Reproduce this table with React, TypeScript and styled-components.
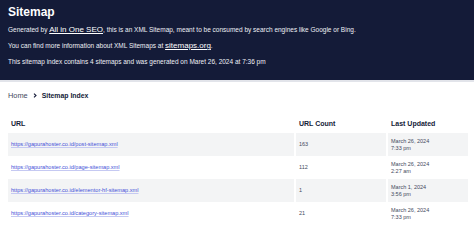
import React, { FC } from "react";
import styled, { createGlobalStyle } from "styled-components";

type SitemapRow = {
  url: string;
  count: number;
  date: string;
  time: string;
};

const rows: SitemapRow[] = [
  { url: "https://gapurahoster.co.id/post-sitemap.xml", count: 163, date: "March 26, 2024", time: "7:33 pm" },
  { url: "https://gapurahoster.co.id/page-sitemap.xml", count: 112, date: "March 26, 2024", time: "2:27 am" },
  { url: "https://gapurahoster.co.id/elementor-hf-sitemap.xml", count: 1, date: "March 1, 2024", time: "3:56 pm" },
  { url: "https://gapurahoster.co.id/category-sitemap.xml", count: 21, date: "March 26, 2024", time: "7:33 pm" },
];

const GlobalStyle = createGlobalStyle`
  body {
    margin: 0;
    background: #ffffff;
    font-family: "Liberation Sans", Arial, sans-serif;
    color: #141b38;
  }
`;

const Header = styled.header`
  background: #141b38;
  color: #eef0f6;
  padding: 5px 8px 10px;
  height: 82px;
  box-sizing: border-box;
  border-bottom: 2px solid #e2e4ea;
`;

const Title = styled.h1`
  margin: 0 0 3px;
  font-size: 12px;
  line-height: 14px;
  font-weight: bold;
  color: #ffffff;
`;

const Info = styled.p`
  margin: 0;
  font-size: 6.5px;
  line-height: 16px;
  white-space: nowrap;

  a {
    color: #ffffff;
    font-size: 8px;
    text-decoration: underline;
  }
`;

const Main = styled.main`
  padding: 8px 4px 0 6px;
`;

const Breadcrumb = styled.nav`
  display: flex;
  align-items: center;
  gap: 5px;
  height: 10px;
  padding-left: 2px;
  font-size: 7.4px;
  color: #434960;
`;

const Crumb = styled.span<{ $current?: boolean }>`
  font-weight: ${(p) => (p.$current ? "bold" : "normal")};
  font-size: ${(p) => (p.$current ? "6.9px" : "7.4px")};
  color: ${(p) => (p.$current ? "#141b38" : "#434960")};
`;

const Table = styled.table`
  margin-top: 11px;
  border-collapse: separate;
  border-spacing: 2px 0;
  table-layout: fixed;
  width: 464px;
`;

const HeadCell = styled.th`
  height: 20px;
  padding: 2px 3px 0;
  text-align: left;
  font-size: 7px;
  font-weight: bold;
  color: #141b38;
  vertical-align: middle;
`;

const Row = styled.tr<{ $shaded: boolean }>`
  td {
    background: ${(p) => (p.$shaded ? "#f3f4f5" : "#ffffff")};
  }
`;

const Cell = styled.td`
  height: 23px;
  padding: 0 3px;
  vertical-align: middle;
  font-size: 5.5px;
  line-height: 6.5px;
  color: #434960;
`;

const Link = styled.a`
  font-size: 5.6px;
  color: #4350d8;
  text-decoration: underline;
  text-decoration-color: #c5c9f2;
`;

const Chevron: FC = () => (
  <svg width="4" height="5" viewBox="0 0 4 5" fill="none">
    <path d="M1 0.6 L3 2.5 L1 4.4" stroke="#141b38" strokeWidth="1.1" />
  </svg>
);

const App: FC = () => {
  return (
    <>
      <GlobalStyle />
      <Header>
        <Title>Sitemap</Title>
        <Info>
          Generated by <a href="#">All in One SEO</a>, this is an XML Sitemap, meant to be consumed by search
          engines like Google or Bing.
        </Info>
        <Info>
          You can find more information about XML Sitemaps at <a href="#">sitemaps.org</a>.
        </Info>
        <Info>
          This sitemap index contains 4 sitemaps and was generated on Maret 26, 2024 at 7:36 pm
        </Info>
      </Header>
      <Main>
        <Breadcrumb>
          <Crumb>Home</Crumb>
          <Chevron />
          <Crumb $current>Sitemap Index</Crumb>
        </Breadcrumb>
        <Table>
          <colgroup>
            <col style={{ width: 286 }} />
            <col style={{ width: 90 }} />
            <col style={{ width: 80 }} />
          </colgroup>
          <thead>
            <tr>
              <HeadCell>URL</HeadCell>
              <HeadCell>URL Count</HeadCell>
              <HeadCell>Last Updated</HeadCell>
            </tr>
          </thead>
          <tbody>
            {rows.map((row, i) => (
              <Row key={row.url} $shaded={i % 2 === 0}>
                <Cell>
                  <Link href="#">{row.url}</Link>
                </Cell>
                <Cell>{row.count}</Cell>
                <Cell>
                  {row.date}
                  <br />
                  {row.time}
                </Cell>
              </Row>
            ))}
          </tbody>
        </Table>
      </Main>
    </>
  );
};

export default App;
